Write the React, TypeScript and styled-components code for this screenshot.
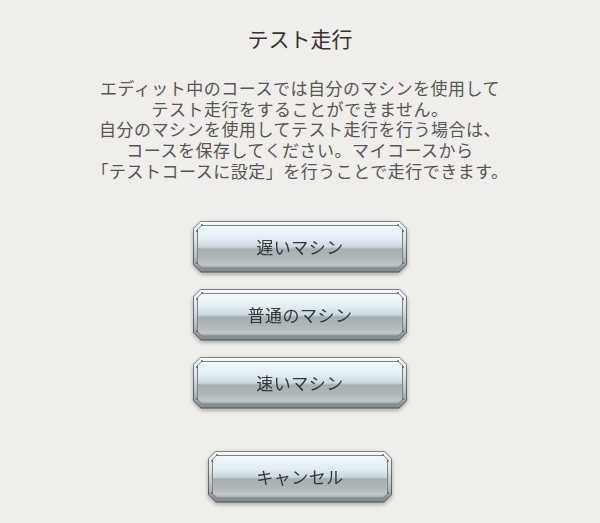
import {FC} from 'react';
import styled, {createGlobalStyle} from 'styled-components';

const GlobalStyle = createGlobalStyle`
    html, body {
        margin: 0;
        padding: 0;
        background: #efeeea;
    }
    body {
        font-family: "Noto Sans CJK JP", "Noto Sans", sans-serif;
    }
`;

const Page = styled.div`
    width: 600px;
    height: 523px;
    display: flex;
    flex-direction: column;
    align-items: center;
    background: #efeeea;
    overflow: hidden;
`;

const Title = styled.h1`
    margin: 25px 0 0;
    font-size: 21px;
    line-height: 26px;
    font-weight: 400;
    color: #333;
`;

const Message = styled.p`
    margin: 27px 0 0;
    font-size: 17px;
    line-height: 20.7px;
    letter-spacing: 0.5px;
    color: #565656;
    text-align: center;
`;

const ButtonList = styled.div`
    display: flex;
    flex-direction: column;
    align-items: center;
    gap: 16px;
    margin-top: 39px;
`;

const chamfer = (c: number) => `polygon(
    ${c}px 0, calc(100% - ${c}px) 0, 100% ${c}px, 100% calc(100% - ${c}px),
    calc(100% - ${c}px) 100%, ${c}px 100%, 0 calc(100% - ${c}px), 0 ${c}px
)`;

const Shadow = styled.div<{$top?: number}>`
    position: relative;
    margin-top: ${p => p.$top ?? 0}px;
    filter: drop-shadow(0 2px 2px rgba(0, 0, 0, 0.3));
`;

const Frame = styled.button<{$width: number}>`
    display: block;
    width: ${p => p.$width}px;
    height: 52px;
    padding: 1px;
    border: none;
    cursor: pointer;
    background: linear-gradient(180deg, #7d8487, #4f5558);
    clip-path: ${chamfer(8)};
`;

const Bezel = styled.div`
    height: 100%;
    box-sizing: border-box;
    padding: 3px;
    background: linear-gradient(180deg, #f7f9fa 0%, #d9dee0 40%, #aeb5b8 75%, #7f878a 100%);
    clip-path: ${chamfer(7)};
`;

const Inset = styled.div`
    height: 100%;
    box-sizing: border-box;
    padding: 1px;
    background: #7b8386;
    clip-path: ${chamfer(5)};
`;

const Face = styled.div`
    height: 100%;
    display: flex;
    align-items: center;
    justify-content: center;
    clip-path: ${chamfer(4)};
    background: linear-gradient(180deg,
        #f1f9fb 0%, #e2eef1 30%, #cbd9dc 50%,
        #a5afb2 55%, #aeb6b9 75%, #c0c7c9 92%, #a0a8ab 100%);
    font-family: "Noto Sans CJK JP", "Noto Sans", sans-serif;
    font-size: 17px;
    color: #33373a;
    letter-spacing: 0.5px;
`;

const Rivet = styled.span<{$x: 'left' | 'right'; $y: 'top' | 'bottom'}>`
    position: absolute;
    width: 2px;
    height: 2px;
    border-radius: 50%;
    background: #5e6568;
    ${p => p.$x}: 8px;
    ${p => p.$y}: 3px;
`;

const SideRivet = styled.span<{$x: 'left' | 'right'; $y: 'top' | 'bottom'}>`
    position: absolute;
    width: 2px;
    height: 2px;
    border-radius: 50%;
    background: #5e6568;
    ${p => p.$x}: 3px;
    ${p => p.$y}: 9px;
`;

const MetalButton: FC<{label: string; width: number; top?: number}> = ({label, width, top}) => (
    <Shadow $top={top}>
        <Frame $width={width}>
            <Bezel>
                <Inset>
                    <Face>{label}</Face>
                </Inset>
            </Bezel>
        </Frame>
        <Rivet $x="left" $y="top"/>
        <Rivet $x="right" $y="top"/>
        <SideRivet $x="left" $y="top"/>
        <SideRivet $x="right" $y="top"/>
        <SideRivet $x="left" $y="bottom"/>
        <SideRivet $x="right" $y="bottom"/>
    </Shadow>
);

export default function App() {
    return (
        <Page>
            <GlobalStyle/>
            <Title>テスト走行</Title>
            <Message>
                エディット中のコースでは自分のマシンを使用して<br/>
                テスト走行をすることができません。<br/>
                自分のマシンを使用してテスト走行を行う場合は、<br/>
                コースを保存してください。マイコースから<br/>
                「テストコースに設定」を行うことで走行できます。
            </Message>
            <ButtonList>
                <MetalButton label="遅いマシン" width={214}/>
                <MetalButton label="普通のマシン" width={214}/>
                <MetalButton label="速いマシン" width={214}/>
                <MetalButton label="キャンセル" width={184} top={26}/>
            </ButtonList>
        </Page>
    );
}
